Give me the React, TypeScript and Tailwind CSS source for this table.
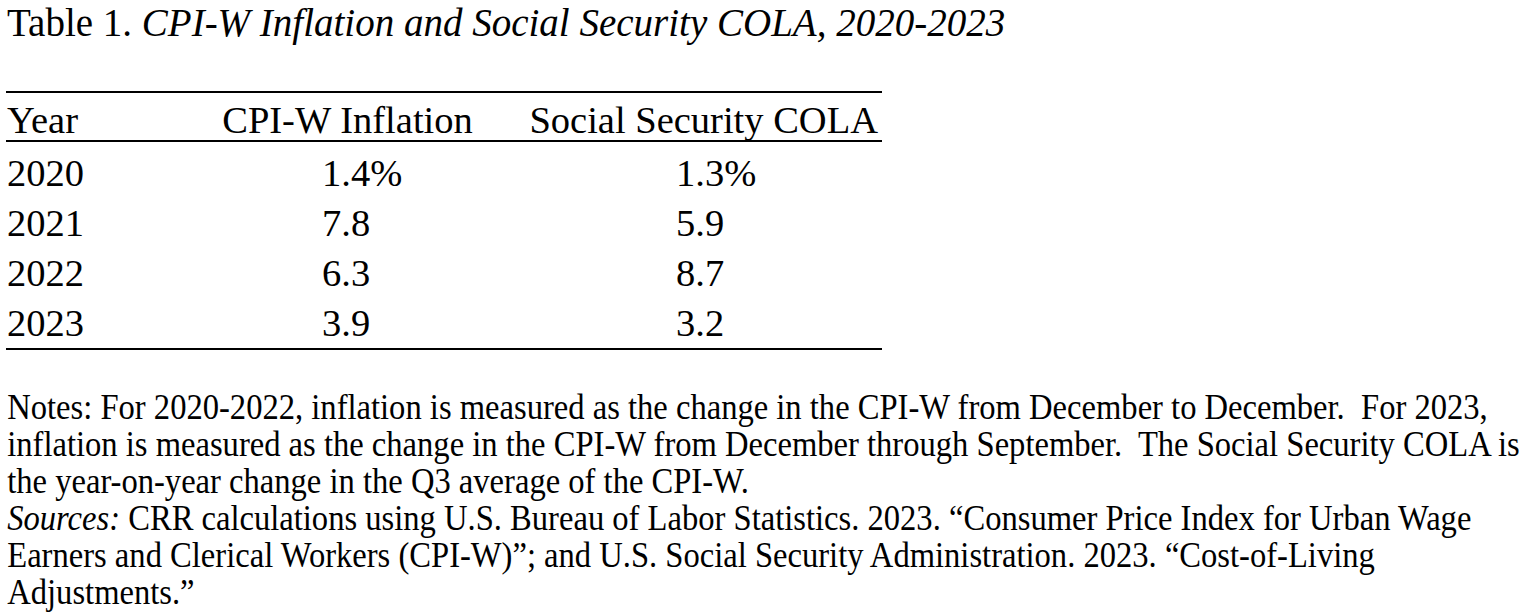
export default function App() {
  const rows = [
    ["2020", "1.4%", "1.3%"],
    ["2021", "7.8", "5.9"],
    ["2022", "6.3", "8.7"],
    ["2023", "3.9", "3.2"],
  ];
  return (
    <div className="w-[1532px] h-[614px] overflow-hidden bg-white text-black font-['Liberation_Serif','Times_New_Roman',serif]">
      <div className="h-[46px] pl-[7px] text-[39px] leading-[46px] whitespace-nowrap">
        Table 1. <i>CPI-W Inflation and Social Security COLA, 2020-2023</i>
      </div>
      <div className="mt-[45px] ml-[6px] w-[876px] border-t-2 border-b-2 border-black text-[38.5px]">
        <div className="grid grid-cols-[210px_263px_403px] h-[49px] pt-[8px] leading-[39px] border-b-2 border-black whitespace-nowrap">
          <div className="pl-[1px]">Year</div>
          <div className="text-center">CPI-W Inflation</div>
          <div className="text-right pr-[4px]">Social Security COLA</div>
        </div>
        <div className="pt-[6px]">
          {rows.map((r) => (
            <div key={r[0]} className="grid grid-cols-[210px_263px_403px] h-[50px] leading-[50px]">
              <div className="pl-[1px]">{r[0]}</div>
              <div className="pl-[106px]">{r[1]}</div>
              <div className="pl-[197px]">{r[2]}</div>
            </div>
          ))}
        </div>
      </div>
      <div className="mt-[39px] pl-[8px] text-[36px] leading-[37px] whitespace-pre origin-top-left scale-x-[0.905]">
        <div>Notes: For 2020-2022, inflation is measured as the change in the CPI-W from December to December.  For 2023,</div>
        <div>inflation is measured as the change in the CPI-W from December through September.  The Social Security COLA is</div>
        <div>the year-on-year change in the Q3 average of the CPI-W.</div>
        <div>
          <i>Sources:</i> CRR calculations using U.S. Bureau of Labor Statistics. 2023. “Consumer Price Index for Urban Wage
        </div>
        <div>Earners and Clerical Workers (CPI-W)”; and U.S. Social Security Administration. 2023. “Cost-of-Living</div>
        <div>Adjustments.”</div>
      </div>
    </div>
  );
}
